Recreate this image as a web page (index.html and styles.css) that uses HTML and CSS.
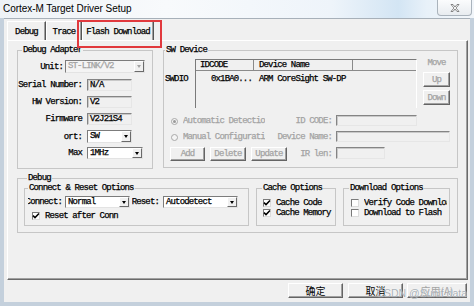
FILE: index.html
```html
<!DOCTYPE html>
<html>
<head>
    <title>Cortex-M Target Driver Setup</title>
    <link rel="stylesheet" href="styles.css">
</head>
<body>
<div class="window">
    <div class="titlebar">
        <span class="title">Cortex-M Target Driver Setup</span>
        <span class="close">
            <svg width="10" height="8" viewBox="0 0 10 8"><path d="M1 0.5H3L5 3L7 0.5H9L6 4L9 7.5H7L5 5L3 7.5H1L4 4Z" fill="#fff" stroke="#6b6b6b" stroke-width="0.8"/></svg>
        </span>
    </div>
    <div class="client">
        <div class="tabs">
            <span class="tab tab-debug">Debug</span>
            <span class="tab tab-trace">Trace</span>
            <span class="tab tab-flash">Flash Download</span>
        </div>
        <div class="panel">
            <div class="top-row">
                <fieldset class="group adapter">
                    <legend>Debug Adapter</legend>
                    <div class="row unit">
                        <span class="lbl">Unit:</span>
                        <span class="combo off"><span class="val">ST-LINK/V2</span><span class="drop"><i></i></span></span>
                    </div>
                    <div class="row r-serial">
                        <span class="lbl">Serial Number:</span>
                        <span class="field">N/A</span>
                    </div>
                    <div class="row">
                        <span class="lbl">HW Version:</span>
                        <span class="field">V2</span>
                    </div>
                    <div class="row">
                        <span class="lbl">Firmware</span>
                        <span class="field">V2J21S4</span>
                    </div>
                    <div class="row r-port">
                        <span class="lbl">ort:</span>
                        <span class="combo"><span class="val">SW</span><span class="drop"><i></i></span></span>
                    </div>
                    <div class="row r-max">
                        <span class="lbl">Max</span>
                        <span class="combo wide"><span class="val">1MHz</span><span class="drop"><i></i></span></span>
                    </div>
                </fieldset>

                <fieldset class="group swdev">
                    <legend>SW Device</legend>
                    <div class="sw-top">
                        <span class="swdio">SWDIO</span>
                        <div class="list">
                            <div class="list-head">
                                <span class="th th-id">IDCODE</span>
                                <span class="th th-name">Device Name</span>
                                <span class="th th-rest"></span>
                            </div>
                            <div class="list-row">
                                <span class="td-id">0x1BA0...</span>
                                <span class="td-name">ARM CoreSight SW-DP</span>
                            </div>
                        </div>
                        <div class="side">
                            <span class="muted">Move</span>
                            <span class="btn off side-up">Up</span>
                            <span class="btn off side-down">Down</span>
                        </div>
                    </div>
                    <div class="sw-bottom">
                        <div class="radio-line">
                            <span class="radio on"></span>
                            <span class="radio-text">Automatic Detection</span>
                        </div>
                        <span class="flbl">ID CODE:</span>
                        <span class="field off f-id"></span>

                        <div class="radio-line">
                            <span class="radio"></span>
                            <span class="radio-text">Manual Configuration</span>
                        </div>
                        <span class="flbl">Device Name:</span>
                        <span class="field off f-name"></span>

                        <div class="sw-buttons">
                            <span class="btn off b-add">Add</span>
                            <span class="btn off b-del">Delete</span>
                            <span class="btn off b-upd">Update</span>
                        </div>
                        <span class="flbl">IR len:</span>
                        <span class="field off f-ir"></span>
                    </div>
                </fieldset>
            </div>

            <fieldset class="group debug">
                <legend>Debug</legend>
                <div class="debug-row">
                    <fieldset class="group connect">
                        <legend>Connect &amp; Reset Options</legend>
                        <div class="row c-row">
                            <span class="clip c-conn"><span>Connect:</span></span>
                            <span class="combo c-normal"><span class="val">Normal</span><span class="drop"><i></i></span></span>
                            <span class="clip c-reset"><span>Reset:</span></span>
                            <span class="combo c-auto"><span class="val">Autodetect</span><span class="drop"><i></i></span></span>
                        </div>
                        <div class="check-line c-after">
                            <span class="check on"><svg width="8" height="8" viewBox="0 0 8 8"><polyline points="1,3.6 3,5.6 7,1.4" fill="none" stroke="#000" stroke-width="1.5"/></svg></span>
                            <span>Reset after Conn</span>
                        </div>
                    </fieldset>
                    <fieldset class="group cache">
                        <legend>Cache Options</legend>
                        <div class="checks">
                            <div class="check-line">
                                <span class="check on"><svg width="8" height="8" viewBox="0 0 8 8"><polyline points="1,3.6 3,5.6 7,1.4" fill="none" stroke="#000" stroke-width="1.5"/></svg></span>
                                <span>Cache Code</span>
                            </div>
                            <div class="check-line">
                                <span class="check on"><svg width="8" height="8" viewBox="0 0 8 8"><polyline points="1,3.6 3,5.6 7,1.4" fill="none" stroke="#000" stroke-width="1.5"/></svg></span>
                                <span>Cache Memory</span>
                            </div>
                        </div>
                    </fieldset>
                    <fieldset class="group download">
                        <legend>Download Options</legend>
                        <div class="checks">
                            <div class="check-line">
                                <span class="check"></span>
                                <span class="cut">Verify Code Download</span>
                            </div>
                            <div class="check-line">
                                <span class="check"></span>
                                <span class="cut">Download to Flash</span>
                            </div>
                        </div>
                    </fieldset>
                </div>
            </fieldset>
        </div>
        <div class="actions">
            <span class="btn big">确定</span>
            <span class="btn big">取消</span>
            <span class="btn big off apply">应用(A)</span>
        </div>
    </div>
    <div class="mark"></div>
    <div class="watermark">CSDN @Sunif data</div>
</div>
</body>
</html>
```

FILE: styles.css
```css
* {
    box-sizing: border-box;
}
body {
    margin: 0;
    width: 474px;
    height: 306px;
    overflow: hidden;
    background: #c4d0dc;
    color: #000;
    font: 9px/10px "Liberation Mono", monospace;
    letter-spacing: -0.85px;
    -webkit-text-stroke: 0.25px #000;
}
.window {
    position: relative;
    height: 306px;
    display: flex;
    flex-direction: column;
}

/* title bar */
.titlebar {
    height: 18px;
    display: flex;
    align-items: flex-start;
    -webkit-text-stroke: 0;
    background: linear-gradient(90deg, #eef2f6 0%, #f8fafc 35%, #eef4fa 70%, #d3e5f4 84%, #e8f1f9 90%, #f2f6fa 100%);
}
.title {
    margin: 3px 0 0 3px;
    font: 10px/11px "Liberation Sans", sans-serif;
    letter-spacing: -0.05px;
}
.close {
    margin-left: auto;
    margin-right: 2px;
    width: 35px;
    height: 16px;
    display: flex;
    align-items: center;
    justify-content: center;
    border: 1px solid #aab3bc;
    border-top: none;
    border-radius: 0 0 4px 4px;
    background: linear-gradient(#fbfcfd, #e8ecf0);
}

/* client area */
.client {
    flex: 1;
    margin: 0 4px 4px 4px;
    background: #f0f0f0;
    border-top: 1px solid #a7b0b9;
    display: flex;
    flex-direction: column;
}
.tabs {
    display: flex;
    height: 19px;
    margin: 2px 0 0 3px;
}
.tab {
    display: flex;
    align-items: center;
    justify-content: center;
    border-top: 1px solid #fff;
    border-left: 1px solid #fff;
    border-right: 1px solid #555;
    box-shadow: inset -1px 0 #a0a0a0;
    padding-top: 1px;
}
.tab-debug { width: 39px; }
.tab-trace { width: 36px; }
.tab-flash { width: 72px; }

.panel {
    width: 461px;
    height: 240px;
    margin-left: 3px;
    border-top: 1px solid #fff;
    border-left: 1px solid #fff;
    border-right: 1px solid #6a6a6a;
    border-bottom: 1px solid #6a6a6a;
    box-shadow: inset -1px -1px #a0a0a0;
}

/* group boxes */
.group {
    margin: 0;
    padding: 0;
    min-width: 0;
    border: 1px solid #c6c6c6;
}
.group legend {
    margin-left: 4px;
    padding: 0 1px;
    height: 11px;
    line-height: 11px;
}
.top-row {
    display: flex;
    align-items: flex-start;
    margin: 4px 0 0 9px;
}
.row {
    display: flex;
    align-items: center;
}

/* debug adapter */
.adapter {
    width: 136px;
    height: 124px;
    padding-top: 4px;
}
.adapter .lbl {
    width: 64px;
    text-align: right;
    white-space: nowrap;
}
.adapter .field,
.adapter .combo {
    margin-left: 5px;
    width: 45px;
}
.adapter .unit .lbl {
    width: 45px;
}
.adapter .unit .combo {
    margin-left: 2px;
    width: 80px;
    height: 13px;
}
.adapter .row + .row {
    margin-top: 5px;
}
.adapter .r-serial {
    margin-top: 6px !important;
}
.adapter .r-port .combo {
    height: 13px;
}
.adapter .r-max {
    margin-top: 4px !important;
}
.adapter .combo.wide {
    width: 56px;
}

.field {
    height: 12px;
    padding-left: 2px;
    line-height: 10px;
    white-space: nowrap;
    border: 1px solid;
    border-color: #848484 #e6e6e6 #e6e6e6 #848484;
    box-shadow: inset 1px 1px #c9c9c9;
    background: #f0f0f0;
}
.combo {
    display: flex;
    height: 12px;
    border: 1px solid;
    border-color: #7c7c7c #e3e3e3 #e3e3e3 #7c7c7c;
    background: #fff;
}
.combo .val {
    flex: 1;
    padding-left: 2px;
    line-height: 10px;
    overflow: hidden;
    white-space: nowrap;
}
.combo .drop {
    width: 10px;
    display: flex;
    align-items: center;
    justify-content: center;
    border: 1px solid;
    border-color: #fff #6a6a6a #6a6a6a #fff;
    background: #f0f0f0;
}
.combo .drop i {
    border-left: 2.5px solid transparent;
    border-right: 2.5px solid transparent;
    border-top: 3px solid #000;
}
.combo.off {
    background: #f4f4f4;
    color: #a3a3a3;
    -webkit-text-stroke-color: #a3a3a3;
}
.combo.off .drop i {
    border-top-color: #a3a3a3;
}

/* sw device */
.swdev {
    width: 295px;
    height: 123px;
    margin-left: 10px;
}
.swdev legend {
    margin-left: 1px;
}
.sw-top {
    display: flex;
    align-items: flex-start;
}
.swdio {
    width: 30px;
    margin: 18px 0 0 1px;
}
.list {
    width: 222px;
    height: 49px;
    margin-top: 3px;
    border-top: 1px solid #7a7a7a;
    border-left: 1px solid #7a7a7a;
    border-right: 1px solid #fff;
}
.list-head {
    display: flex;
    height: 11px;
}
.th {
    line-height: 10px;
    padding-left: 4px;
    border-right: 1px solid #8a8a8a;
    border-bottom: 1px solid #8a8a8a;
}
.th-id { width: 58px; }
.th-name { width: 99px; padding-left: 5px; }
.th-rest { flex: 1; border-right: none; }
.list-row {
    display: flex;
    margin-top: 3px;
}
.td-id {
    width: 58px;
    padding-left: 15px;
    white-space: nowrap;
}
.td-name {
    padding-left: 5px;
    white-space: nowrap;
}
.side {
    width: 27px;
    margin: 2px 0 0 6px;
    display: flex;
    flex-direction: column;
    text-align: center;
}
.muted {
    color: #a3a3a3;
    -webkit-text-stroke-color: #a3a3a3;
}
.side-up {
    margin-top: 4px;
    height: 15px;
}
.side-down {
    margin-top: 3px;
    height: 15px;
}
.btn {
    display: flex;
    align-items: center;
    justify-content: center;
    border: 1px solid;
    border-color: #fff #646464 #646464 #fff;
    box-shadow: inset -1px -1px #a0a0a0;
    background: #f0f0f0;
    white-space: nowrap;
}
.btn.off {
    color: #a3a3a3;
    -webkit-text-stroke-color: #a3a3a3;
}
.sw-bottom {
    display: grid;
    grid-template-columns: 120px 46px 114px;
    grid-template-rows: 12px 12px 14px;
    row-gap: 4px;
    margin: 7px 0 0 6px;
}
.radio-line {
    display: flex;
    align-items: center;
    color: #a3a3a3;
    -webkit-text-stroke-color: #a3a3a3;
}
.radio {
    width: 7px;
    height: 7px;
    margin-left: 1px;
    border-radius: 50%;
    border: 1px solid #a9a9a9;
    background: #f4f4f4;
    display: flex;
    align-items: center;
    justify-content: center;
}
.radio.on::after {
    content: "";
    width: 3px;
    height: 3px;
    border-radius: 50%;
    background: #9a9a9a;
}
.radio-text {
    width: 82px;
    margin-left: 5px;
    overflow: hidden;
    white-space: nowrap;
}
.flbl {
    display: flex;
    justify-content: flex-end;
    align-items: center;
    padding-right: 4px;
    white-space: nowrap;
    color: #a3a3a3;
    -webkit-text-stroke-color: #a3a3a3;
}
.field.off {
    height: 11px;
}
.f-id { width: 81px; }
.f-name { width: 114px; }
.f-ir { width: 49px; height: 12px !important; }
.sw-buttons {
    display: flex;
    gap: 5px;
}
.b-add { width: 35px; }
.b-del { width: 36px; }
.b-upd { width: 36px; }

/* debug options */
.debug {
    width: 441px;
    height: 60px;
    margin: 4px 0 0 9px;
    padding: 0 7px 0 6px;
}
.debug legend {
    margin-left: 3px;
}
.debug-row {
    display: flex;
    gap: 7px;
    margin-top: -1px;
}
.connect { width: 225px; height: 43px; }
.cache { width: 80px; height: 43px; }
.download { width: 107px; height: 43px; }
.cache legend,
.download legend {
    margin-left: 5px;
}
.c-row {
    margin-top: 2px;
}
.clip {
    display: flex;
    justify-content: flex-end;
    overflow: hidden;
    white-space: nowrap;
}
.c-conn { width: 34px; margin-left: 3px; }
.c-normal { width: 65px; margin-left: 3px; }
.c-reset { width: 27px; margin-left: 2px; }
.c-auto { width: 75px; margin-left: 4px; }
.check-line {
    display: flex;
    align-items: center;
    height: 10px;
    white-space: nowrap;
}
.check-line .check + span {
    margin-left: 5px;
}
.c-after {
    margin: 3px 0 0 7px;
}
.check {
    width: 8px;
    height: 8px;
    flex: none;
    display: flex;
    align-items: center;
    justify-content: center;
    border: 1px solid;
    border-color: #7a7a7a #dcdcdc #dcdcdc #7a7a7a;
    background: #fff;
}
.check svg {
    margin: -1px;
}
.checks {
    margin: 4px 0 0 6px;
}
.download .checks {
    margin-left: 7px;
}
.cut {
    width: 83px;
    overflow: hidden;
}

/* dialog buttons */
.actions {
    display: flex;
    justify-content: flex-end;
    gap: 5px;
    margin-top: 3px;
    padding-right: 3px;
    -webkit-text-stroke: 0;
}
.btn.big {
    width: 55px;
    height: 15px;
    font: 10px/1 "Noto Sans CJK SC", sans-serif;
    letter-spacing: 0;
}
.btn.apply {
    width: 60px;
    margin-left: -1px;
}

/* annotation overlays */
.mark {
    position: absolute;
    left: 77px;
    top: 20px;
    width: 85px;
    height: 28px;
    border: 2px solid #e1393d;
}
.watermark {
    position: absolute;
    right: 7px;
    bottom: 7px;
    font: 10.5px/12px "Liberation Sans", sans-serif;
    letter-spacing: 0;
    color: rgba(140, 150, 160, 0.75);
    text-shadow: 0 0 1px #fff;
    -webkit-text-stroke: 0;
}
```
